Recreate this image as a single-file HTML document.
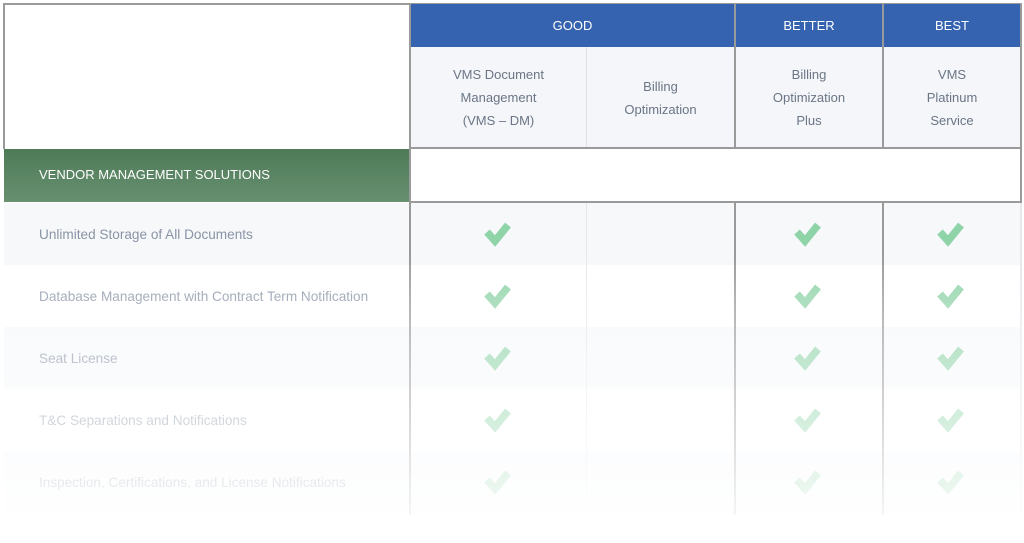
<!DOCTYPE html>
<html><head><style>
*{margin:0;padding:0;box-sizing:border-box}
body{width:1024px;height:543px;background:#fff;position:relative;overflow:hidden;font-family:"Liberation Sans",sans-serif}
.a{position:absolute}
.hdr{background:#3563b0;color:#fff;font-size:13px;display:flex;align-items:center;justify-content:center;top:4px;height:43px}
.sub{background:#f4f6f9;color:#6b7585;font-size:13px;line-height:23px;text-align:center;display:flex;align-items:center;justify-content:center;top:47px;height:101px}
.vl{width:2px;background:#9a9a9a}
.row{left:4px;width:1017px;height:62px}
.lbl{left:39px;font-size:13.6px;color:#8a94a6}
</style></head><body>
<div class="a" style="left:3px;top:3px;width:1019px;height:2px;background:#9a9a9a"></div>
<div class="a" style="left:3px;top:3px;width:2px;height:146px;background:#9a9a9a"></div>
<div class="a" style="left:1020px;top:3px;width:2px;height:200px;background:#9a9a9a"></div>
<div class="a hdr" style="left:411px;width:323px">GOOD</div>
<div class="a hdr" style="left:736px;width:146px">BETTER</div>
<div class="a hdr" style="left:884px;width:136px">BEST</div>
<div class="a sub" style="left:411px;width:175px">VMS Document<br>Management<br>(VMS – DM)</div>
<div class="a sub" style="left:587px;width:147px">Billing<br>Optimization</div>
<div class="a sub" style="left:736px;width:146px">Billing<br>Optimization<br>Plus</div>
<div class="a sub" style="left:884px;width:136px">VMS<br>Platinum<br>Service</div>
<div class="a" style="left:586px;top:47px;width:1px;height:101px;background:#dde0e5"></div>
<div class="a" style="left:411px;top:147px;width:610px;height:2px;background:#9a9a9a"></div>
<div class="a" style="left:4px;top:149px;width:406px;height:53px;background:linear-gradient(#4f7a58,#66906f);color:#fff;font-size:13px;padding:18px 0 0 35px">VENDOR MANAGEMENT SOLUTIONS</div>
<div class="a" style="left:410px;top:201px;width:611px;height:2px;background:#9a9a9a"></div>
<div class="a row" style="top:203px;background:#f6f8fa"></div>
<div class="a row" style="top:327px;background:#f6f8fa"></div>
<div class="a row" style="top:451px;background:#f6f8fa"></div>
<div class="a lbl" style="top:227px">Unlimited Storage of All Documents</div>
<div class="a lbl" style="top:289px">Database Management with Contract Term Notification</div>
<div class="a lbl" style="top:351px">Seat License</div>
<div class="a lbl" style="top:413px">T&amp;C Separations and Notifications</div>
<div class="a lbl" style="top:475px">Inspection, Certifications, and License Notifications</div>
<div class="a vl" style="left:409px;top:3px;height:512px"></div>
<div class="a" style="left:586px;top:203px;width:1px;height:312px;background:#e6e8ec"></div>
<div class="a vl" style="left:734px;top:3px;height:146px"></div>
<div class="a vl" style="left:882px;top:3px;height:146px"></div>
<div class="a vl" style="left:734px;top:201px;height:314px"></div>
<div class="a vl" style="left:882px;top:201px;height:314px"></div>
<div class="a" style="left:1020px;top:203px;width:2px;height:312px;background:#e6e8ec"></div>
<svg class="a" style="left:0;top:0" width="1024" height="543">
<defs><path id="c" d="M-11,-2 L-3,7 L10,-9" fill="none" stroke="#8fd3a8" stroke-width="7.5" stroke-linecap="butt" stroke-linejoin="miter"/></defs>
<use href="#c" x="498" y="234"/><use href="#c" x="808" y="234"/><use href="#c" x="951" y="234"/>
<use href="#c" x="498" y="296"/><use href="#c" x="808" y="296"/><use href="#c" x="951" y="296"/>
<use href="#c" x="498" y="358"/><use href="#c" x="808" y="358"/><use href="#c" x="951" y="358"/>
<use href="#c" x="498" y="420"/><use href="#c" x="808" y="420"/><use href="#c" x="951" y="420"/>
<use href="#c" x="498" y="482"/><use href="#c" x="808" y="482"/><use href="#c" x="951" y="482"/>
</svg>
<div class="a" style="left:0;top:255px;width:1024px;height:288px;background:linear-gradient(rgba(255,255,255,0),rgba(255,255,255,0.25) 15%,rgba(255,255,255,0.85) 85%,#fff)"></div>
</body></html>
